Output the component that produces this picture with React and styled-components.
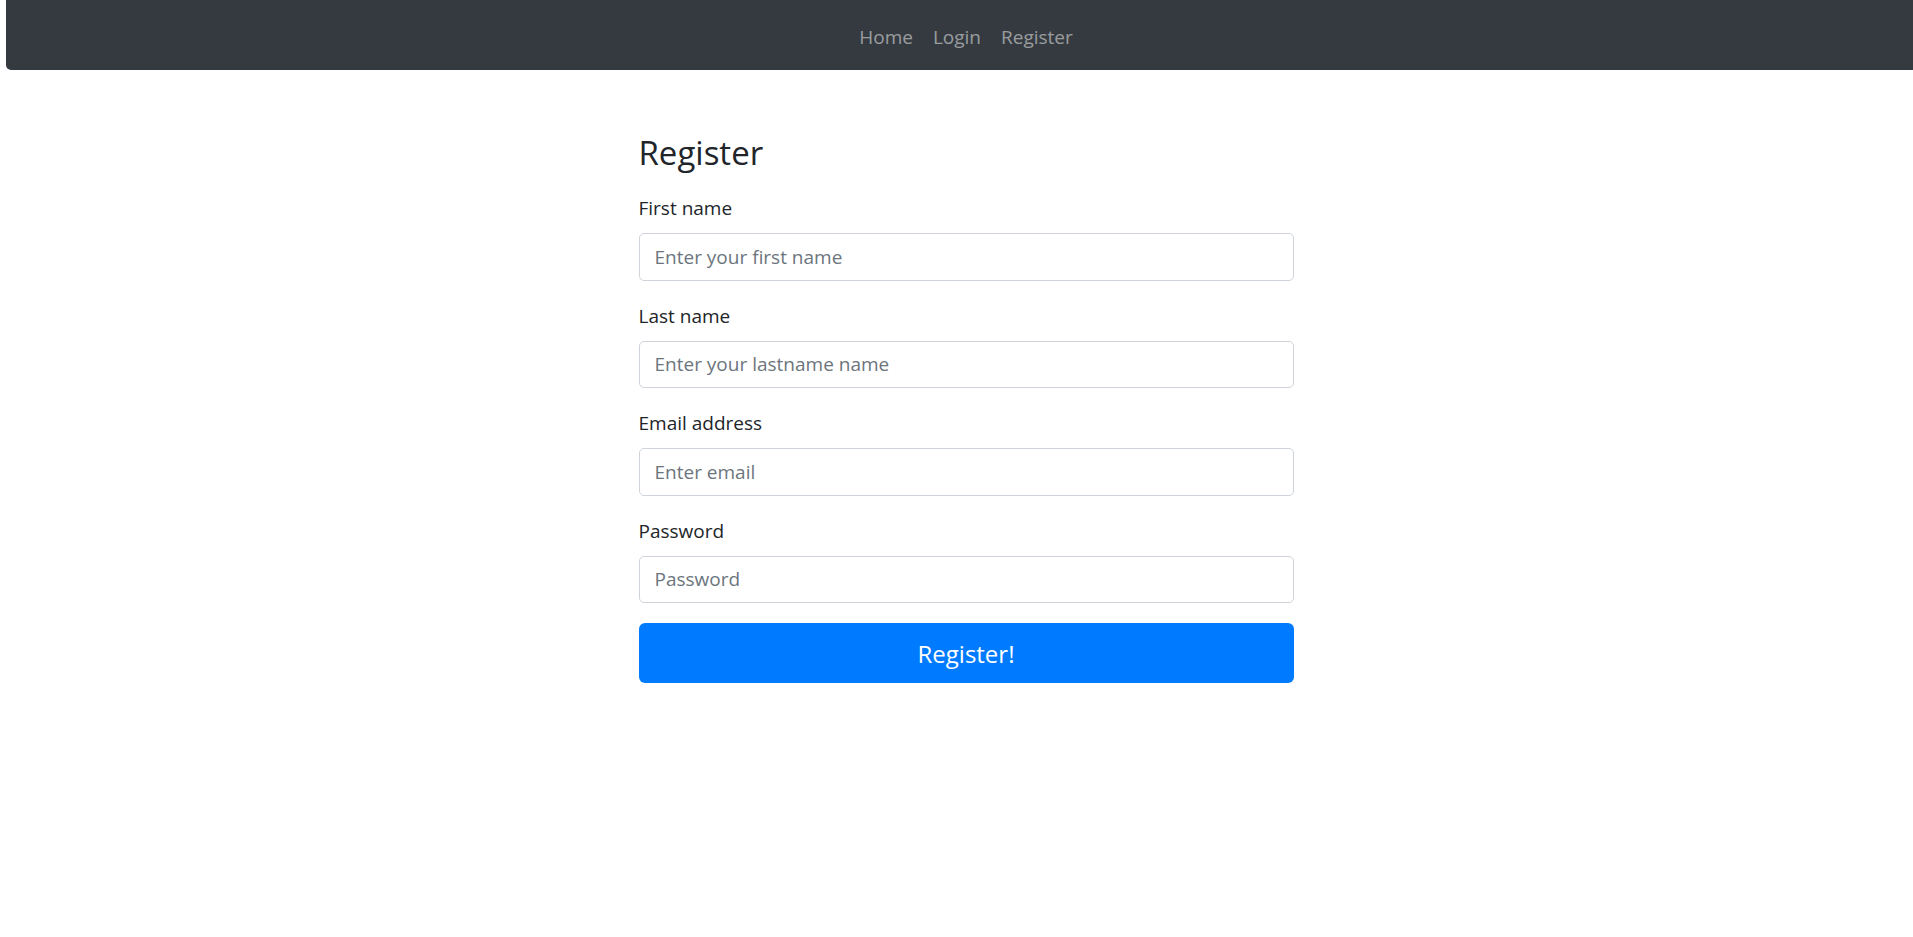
import React from "react";
import styled, { createGlobalStyle } from "styled-components";

const GlobalStyle = createGlobalStyle`
  html, body {
    margin: 0;
    padding: 0;
    background: #fff;
  }
  body {
    font-family: "Open Sans", "Noto Sans", "Liberation Sans", sans-serif;
    color: #212529;
    overflow-x: hidden;
  }
  * {
    box-sizing: border-box;
  }
`;

const Navbar = styled.nav`
  height: 70px;
  margin-left: 6px;
  padding: 3px 0 0 13px;
  background: #343a40;
  border-bottom-left-radius: 5px;
  display: flex;
  align-items: center;
  justify-content: center;
`;

const NavLink = styled.a`
  padding: 0 10px;
  font-size: 19px;
  line-height: 30px;
  color: rgba(255, 255, 255, 0.5);
  text-decoration: none;
  cursor: pointer;
`;

const Main = styled.main`
  display: flex;
  justify-content: center;
  padding: 62px 0 0 19px;
`;

const Form = styled.form`
  width: 655px;
  display: flex;
  flex-direction: column;
`;

const Title = styled.h3`
  margin: 0 0 19px;
  font-size: 33px;
  font-weight: 400;
  line-height: 42px;
`;

const Group = styled.div`
  display: flex;
  flex-direction: column;
  margin-bottom: 20px;
`;

const Label = styled.label`
  font-size: 19px;
  line-height: 30px;
  margin-bottom: 10px;
`;

const Input = styled.input`
  height: 47.5px;
  padding: 7.5px 15px;
  font-family: inherit;
  font-size: 19px;
  color: #495057;
  border: 1px solid #ced4da;
  border-radius: 5px;
  outline: none;

  &::placeholder {
    color: #6c757d;
  }
`;

const Button = styled.button`
  height: 60px;
  border: none;
  border-radius: 6px;
  background: #007bff;
  color: #fff;
  font-family: inherit;
  font-size: 24px;
  cursor: pointer;
`;

const fields = [
  { id: "firstName", label: "First name", type: "text", placeholder: "Enter your first name" },
  { id: "lastName", label: "Last name", type: "text", placeholder: "Enter your lastname name" },
  { id: "email", label: "Email address", type: "email", placeholder: "Enter email" },
  { id: "password", label: "Password", type: "password", placeholder: "Password" },
];

export default function App() {
  return (
    <>
      <GlobalStyle />
      <Navbar>
        <NavLink>Home</NavLink>
        <NavLink>Login</NavLink>
        <NavLink>Register</NavLink>
      </Navbar>
      <Main>
        <Form onSubmit={(e) => e.preventDefault()}>
          <Title>Register</Title>
          {fields.map((f) => (
            <Group key={f.id}>
              <Label htmlFor={f.id}>{f.label}</Label>
              <Input id={f.id} type={f.type} placeholder={f.placeholder} />
            </Group>
          ))}
          <Button type="submit">Register!</Button>
        </Form>
      </Main>
    </>
  );
}
